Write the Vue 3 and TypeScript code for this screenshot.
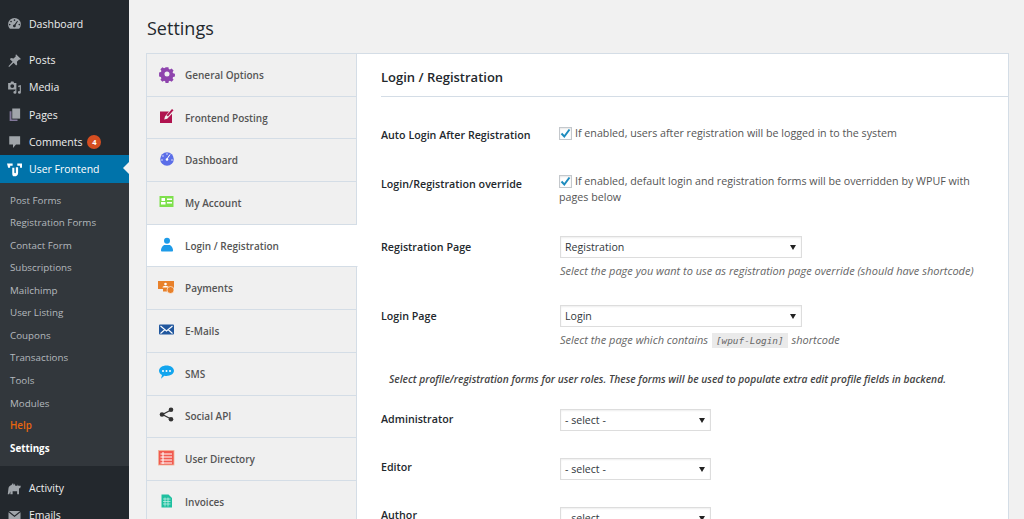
<script setup lang="ts">
const subItems: string[] = ['Post Forms','Registration Forms','Contact Form','Subscriptions','Mailchimp','User Listing','Coupons','Transactions','Tools','Modules']
const tabs: { id: string; label: string; active?: boolean }[] = [
  { id: 'gear', label: 'General Options' },
  { id: 'post', label: 'Frontend Posting' },
  { id: 'dash', label: 'Dashboard' },
  { id: 'account', label: 'My Account' },
  { id: 'user', label: 'Login / Registration', active: true },
  { id: 'pay', label: 'Payments' },
  { id: 'mail', label: 'E-Mails' },
  { id: 'sms', label: 'SMS' },
  { id: 'share', label: 'Social API' },
  { id: 'dir', label: 'User Directory' },
  { id: 'inv', label: 'Invoices' },
]
const roles: { name: string; cls: string }[] = [
  { name: 'Administrator', cls: 'r-admin' },
  { name: 'Editor', cls: 'r-editor' },
  { name: 'Author', cls: 'r-author' },
]
</script>

<template>
  <div class="page">
    <aside class="side">
      <div class="mi mi-first">
        <svg class="mic" viewBox="0 0 20 20"><path fill="#a0a5aa" d="M10 2.500a8.500 8.500 0 0 0-8.500 8.500c0 2.300.9 4.400 2.400 6h12.200a8.500 8.500 0 0 0 2.400-6A8.500 8.500 0 0 0 10 2.500zM10 4.400a1.100 1.100 0 1 1 0 2.200 1.100 1.100 0 0 1 0-2.200zM5.400 6.300a1.100 1.100 0 1 1 0 2.200 1.100 1.100 0 0 1 0-2.200zM3.600 10.300a1.100 1.100 0 1 1 0 2.200 1.100 1.100 0 0 1 0-2.200zM16.400 10.300a1.100 1.100 0 1 1 0 2.200 1.100 1.100 0 0 1 0-2.200zM13.600 6.200l1 .7-3.100 5.200a1.900 1.900 0 1 1-1.500-.9z"/></svg>
        <span>Dashboard</span>
      </div>
      <div class="mi">
        <svg class="mic" viewBox="0 0 20 20"><path fill="#a0a5aa" d="M12 1.500l6.500 6.500-1.300 1-1-.4-3 3 .4 3.600-1.400 1.300-3.400-3.500-6 5.500-.9-.9 5.500-6-3.500-3.400 1.300-1.400 3.600.4 3-3-.4-1z"/></svg>
        <span>Posts</span>
      </div>
      <div class="mi">
        <svg class="mic" viewBox="0 0 20 20"><path fill="#a0a5aa" fill-rule="evenodd" d="M1.500 4h3l1-2h3l1 2h3v8.500h-11zM7 5.500a2.600 2.600 0 1 0 0 5.200 2.600 2.600 0 0 0 0-5.200z"/><path fill="#a0a5aa" d="M15 7.500l3.500-1v10a2 1.700 0 1 1-1.500-1.600V9l-2 .5zM11 12.500h1.500v4a2 1.700 0 1 1-1.500-1.600z"/></svg>
        <span>Media</span>
      </div>
      <div class="mi">
        <svg class="mic" viewBox="0 0 20 20"><path fill="#a0a5aa" d="M7 2h10.500v13.500H7z"/><path fill="#82789a" d="M3.500 5.500H6V16.500h8v2H3.500z"/></svg>
        <span>Pages</span>
      </div>
      <div class="mi">
        <svg class="mic" viewBox="0 0 20 20"><path fill="#a0a5aa" d="M3 3h14.500v11h-5.500l-4 4.500V14H3z"/></svg>
        <span>Comments</span><b class="badge">4</b>
      </div>
      <div class="mi mi-on">
        <svg class="mic" viewBox="0 0 20 20"><path fill="#fff" d="M0 2h7.500v3H4.200v2.500H1.500zM12.500 2H20v5.500h-2.700V5h-3.600v-3zM7 7.500h2.800v6.500a1 1 0 0 0 2 0V7h3v7.500c0 3-2.200 4.500-4.800 4.500S7 17.500 7 14.500z"/></svg>
        <span>User Frontend</span><i class="tip"></i>
      </div>
      <nav class="sub">
        <a v-for="s in subItems" :key="s">{{ s }}</a>
        <a class="help">Help</a>
        <a class="cur">Settings</a>
      </nav>
      <div class="mi mi-act">
        <svg class="mic" viewBox="0 0 20 20"><path fill="#a0a5aa" d="M8 2.500l1.200 3.200 1.300-2.500.5 3h3l.5-2 .5 2h3.500l-1 3.500h-1.500v8h-2.500v-4H7.500v4H4.500v-4l-1.500 4H1l1-8c.3-2.500 2-4 4-4.500z"/></svg>
        <span>Activity</span>
      </div>
      <div class="mi">
        <svg class="mic" viewBox="0 0 20 20"><path fill="#a0a5aa" d="M2.500 4h15l-7.500 6zM2 5.800l8 6.300 8-6.300V16H2z"/></svg>
        <span>Emails</span>
      </div>
    </aside>

    <main class="main">
      <h1 class="title">Settings</h1>
      <div class="wrap">
        <ul class="tabs">
          <li v-for="t in tabs" :key="t.id" class="tab" :class="{ on: t.active }">
            <svg class="tic" viewBox="0 0 18 18">
              <g v-if="t.id === 'gear'"><path fill="#8e44ad" fill-rule="evenodd" d="M7.400 1.500h3.200l.4 2 1.300.6 1.800-1.100 2.200 2.200-1.100 1.800.6 1.300 2 .4v3.200l-2 .4-.6 1.300 1.100 1.800-2.200 2.200-1.800-1.100-1.300.6-.4 2H7.400l-.4-2-1.300-.6-1.800 1.100-2.200-2.200 1.100-1.800-.6-1.300-2-.4V7.300l2-.4.6-1.300L1.700 3.800l2.200-2.200 1.800 1.100L7 2.100zM9 6.300a2.800 2.800 0 1 0 0 5.600 2.800 2.800 0 0 0 0-5.600z" transform="translate(.9 .9) scale(.9)"/></g>
              <g v-else-if="t.id === 'post'"><path fill="#b0134f" d="M2 3.500h9l-4 5-.8 3 3-.8 4.800-5V15H2z"/><path fill="#b0134f" d="M14 1l1.500 1.200-5.500 6.300-1.500-1.200z"/></g>
              <g v-else-if="t.id === 'dash'"><circle cx="9" cy="9" r="6.800" fill="#5b6ee8"/><path stroke="#fff" stroke-width="1" d="M9 9l3-4.500" /><circle cx="9" cy="4" r=".7" fill="#fff"/><circle cx="5" cy="6" r=".7" fill="#fff"/><circle cx="4" cy="10" r=".7" fill="#fff"/><circle cx="14" cy="10" r=".7" fill="#fff"/><circle cx="9" cy="9.500" r="1.300" fill="#fff"/></g>
              <g v-else-if="t.id === 'account'"><rect x="1.500" y="3" width="14" height="11" fill="#7ee04c"/><rect x="3.500" y="5" width="3.500" height="3" fill="#fff"/><rect x="3" y="9" width="4.500" height="2.500" fill="#fff"/><rect x="9" y="5.500" width="5" height="1.500" fill="#fff"/><rect x="9" y="9" width="5" height="1.500" fill="#fff"/></g>
              <g v-else-if="t.id === 'user'"><circle cx="9" cy="4.800" r="3" fill="#1e9be8"/><path fill="#1e9be8" d="M3 14.500c0-3 2-5.500 3.800-5.500h4.400C13 9 15 11.500 15 14.500c0 .8-.5 1-1 1H4c-.5 0-1-.2-1-1z"/></g>
              <g v-else-if="t.id === 'pay'"><path fill="#e8812b" d="M0 3h16v8h-3v2.500H5V11H0z"/><circle cx="7.500" cy="6" r="1.300" fill="#fff"/><path fill="#fff" d="M4.500 9.500c0-1 1.500-1.800 3-1.800s3 .8 3 1.800z"/><circle cx="12.500" cy="12" r="3.500" fill="#e8812b" stroke="#fff" stroke-width=".6"/></g>
              <g v-else-if="t.id === 'mail'"><rect x="1" y="3.500" width="15" height="10" rx="1" fill="#21579e"/><path d="M2.500 5l6 5 6-5M2.500 12.500l4.500-4M14.500 12.500l-4.500-4" fill="none" stroke="#fff" stroke-width="1.100"/></g>
              <g v-else-if="t.id === 'sms'"><path fill="#12a5ee" d="M8.500 1.500c4 0 7.500 2.200 7.500 5.300s-3.500 5.200-7.500 5.200c-.8 0-1.500-.1-2.200-.2l-3.300 3 1-3.800C2.300 10.100 1 8.500 1 6.800c0-3.100 3.500-5.300 7.500-5.300z"/><circle cx="5" cy="7" r="1" fill="#fff"/><circle cx="8.500" cy="7" r="1" fill="#fff"/><circle cx="12" cy="7" r="1" fill="#fff"/></g>
              <g v-else-if="t.id === 'share'"><path d="M13 4L4.500 8.500 13 13" fill="none" stroke="#333" stroke-width="1.300"/><circle cx="13" cy="3.800" r="2.300" fill="#333"/><circle cx="4" cy="8.500" r="2.300" fill="#333"/><circle cx="13" cy="13.200" r="2.300" fill="#333"/></g>
              <g v-else-if="t.id === 'dir'"><rect x="0.500" y="1.500" width="15.500" height="14.500" fill="#f15a50" stroke="#f0b49a" stroke-width=".8"/><path d="M2.500 5h11.500M2.500 8h11.500M2.500 11h11.500M2.500 14h11.500M5 3v12" stroke="#fff" stroke-width="1" fill="none"/></g>
              <g v-else><path fill="#1fc0a0" d="M3.500 2.500h7l3.500 3.500v9.500H3.500z"/><path d="M5 7h7.500M5 9.500h7.500M5 12h7.500M7 5.500v9M10 5.500v9" stroke="#cdf3ea" stroke-width=".7" fill="none"/></g>
            </svg>
            <span>{{ t.label }}</span>
          </li>
        </ul>

        <section class="panel">
          <h2 class="ph">Login / Registration</h2>
          <div class="form">
            <div class="row r1">
              <label class="lb">Auto Login After Registration</label>
              <div class="fld fld-c">
                <span class="cb"><svg viewBox="0 0 13 13"><path d="M2.500 6.500l2.800 3L10.500 2.500" fill="none" stroke="#1e8cbe" stroke-width="2"/></svg></span>If enabled, users after registration will be logged in to the system
              </div>
            </div>
            <div class="row r2">
              <label class="lb">Login/Registration override</label>
              <div class="fld fld-c fld-up">
                <span class="cb"><svg viewBox="0 0 13 13"><path d="M2.500 6.500l2.800 3L10.500 2.500" fill="none" stroke="#1e8cbe" stroke-width="2"/></svg></span>If enabled, default login and registration forms will be overridden by WPUF with pages below
              </div>
            </div>
            <div class="row r3">
              <label class="lb lb-s">Registration Page</label>
              <div class="fld">
                <div class="sel wide">Registration</div>
                <p class="desc">Select the page you want to use as registration page override (should have shortcode)</p>
              </div>
            </div>
            <div class="row r4">
              <label class="lb lb-s">Login Page</label>
              <div class="fld">
                <div class="sel wide">Login</div>
                <p class="desc">Select the page which contains <code>[wpuf-Login]</code> shortcode</p>
              </div>
            </div>
            <p class="note">Select profile/registration forms for user roles. These forms will be used to populate extra edit profile fields in backend.</p>
            <div v-for="r in roles" :key="r.name" class="row" :class="r.cls">
              <label class="lb lb-s">{{ r.name }}</label>
              <div class="fld"><div class="sel narrow">- select -</div></div>
            </div>
          </div>
        </section>
      </div>
    </main>
  </div>
</template>

<style>
html, body { margin: 0; height: 519px; overflow: hidden; background: #f1f1f1; }
</style>

<style scoped>
.page { display: flex; height: 519px; overflow: hidden; background: #f1f1f1; font-family: "Open Sans", "Noto Sans", sans-serif; font-size: 10.5px; color: #444; }
.side { width: 129px; flex: none; background: #23282d; padding-top: 10px; box-sizing: border-box; overflow: hidden; }
.mi { display: flex; align-items: center; height: 27.2px; color: #eee; font-size: 10.5px; position: relative; padding-left: 7px; box-sizing: border-box; }
.mi span { margin-left: 7px; }
.mi-first { margin-bottom: 9.5px; }
.mic { width: 15px; height: 15px; flex: none; }
.badge { margin-left: 5px; width: 14px; height: 14px; border-radius: 50%; background: #d54e21; color: #fff; font-size: 7.500px; line-height: 14px; text-align: center; font-weight: 700; }
.mi-on { background: #0073aa; color: #fff; }
.tip { position: absolute; right: 0; top: 7px; border: 6.500px solid transparent; border-right-color: #f1f1f1; border-left-width: 0; }
.sub { background: #32373c; padding: 7px 0 5.500px; margin-bottom: 9px; }
.sub a { display: block; height: 22.560px; line-height: 22.560px; padding-left: 10px; color: #b4b9be; font-size: 9.800px; }
.sub .help { color: #e8660e; font-weight: 600; }
.sub .cur { color: #fff; font-weight: 700; }
.main { flex: 1; min-width: 0; padding: 0 15px 0 17px; }
.title { margin: 0; padding: 16px 0 0 1px; height: 53px; box-sizing: border-box; font-size: 18px; line-height: 24px; font-weight: 400; color: #23282d; }
.wrap { display: flex; align-items: flex-start; }
.tabs { list-style: none; margin: 0; padding: 0; width: 211px; flex: none; border-left: 1px solid #d4dde6; box-sizing: border-box; border-top: 1px solid #d4dde6; }
.tab { display: flex; align-items: center; height: 42.700px; box-sizing: border-box; padding-left: 11px; background: #f0f0f0; border-bottom: 1px solid #d4dde6; border-right: 1px solid #d4dde6; color: #555; font-size: 10px; font-weight: 600; }
.tab.on { background: #fff; border-right-color: #fff; margin-right: -1px; position: relative; }
.tic { width: 18px; height: 18px; flex: none; margin-top: -2px; margin-right: 9px; }
.panel { flex: 1; min-width: 0; height: 600px; background: #fff; border: 1px solid #d4dde6; border-left: 0; box-sizing: border-box; }
.ph { margin: 0 -1px 0 24px; height: 43px; line-height: 46px; box-sizing: border-box; font-size: 13px; font-weight: 600; color: #23282d; border-bottom: 1px solid #d4dde6; }
.form { padding: 30px 36px 0 24px; }
.row { display: grid; grid-template-columns: 179px 1fr; }
.lb { display: block; font-size: 10.700px; line-height: 16px; font-weight: 600; color: #23282d; }
.lb-s { padding-top: 3px; }
.fld { font-size: 10.700px; line-height: 16px; color: #555; }
.fld-c { margin: -2px 0 0 -1px; }
.fld-up { margin-top: -3px; }
.cb { display: inline-block; vertical-align: -3px; width: 13px; height: 13px; margin-right: 3px; border: 1px solid #c4c8cc; box-sizing: border-box; background: #fff; box-shadow: inset 0 1px 2px rgba(0,0,0,.1); }
.cb svg { display: block; width: 13px; height: 13px; margin: -1px; }
.r2 { margin-top: 33px; }
.r3 { margin-top: 31px; }
.r4 { margin-top: 26px; }
.sel { position: relative; height: 22px; line-height: 20px; box-sizing: border-box; border: 1px solid #ddd; box-shadow: inset 0 1px 2px rgba(0,0,0,.07); background: #fff; padding-left: 4px; color: #32373c; font-size: 10.600px; }
.sel::after { content: ""; position: absolute; right: 5px; top: 8px; border: 3px solid transparent; border-top: 5px solid #222; border-bottom: 0; }
.wide { width: 242px; }
.narrow { width: 151px; }
.desc { margin: 5px 0 0; font-style: italic; font-size: 11px; line-height: 16px; color: #666; white-space: nowrap; }
code { font-family: "DejaVu Sans Mono", "Liberation Mono", monospace; font-size: 9.400px; background: #eaeaea; padding: 2px 4px; margin: 0 1px; }
.note { margin: 22px 0 0; padding-left: 8px; font-size: 10.260px; line-height: 16px; font-weight: 600; font-style: italic; color: #444; white-space: nowrap; }
.r-admin { margin-top: 22px; }
.r-admin .lb { padding-top: 2px; }
.r-editor { margin-top: 27px; }
.r-editor .lb { padding-top: 1px; }
.r-author { margin-top: 27px; }
.r-author .lb { padding-top: 0; }
</style>
